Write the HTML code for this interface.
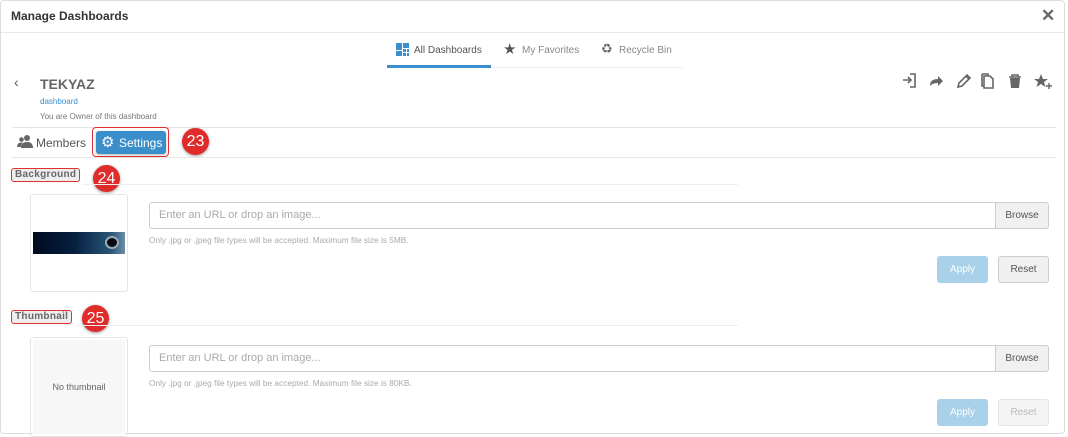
<!DOCTYPE html>
<html><head><meta charset="utf-8"><style>
*{box-sizing:border-box;margin:0;padding:0}
body{width:1068px;height:434px;overflow:hidden;background:#fff;font-family:"Liberation Sans",Arial,sans-serif;position:relative;color:#555}
.a{position:absolute}
.hl{position:absolute;height:1px;background:#e5e5e5}
.badge{position:absolute;width:27px;height:27px;border-radius:50%;background:#e02b2b;color:#fff;font-size:16px;text-align:center;line-height:27px;box-shadow:0 1px 3px rgba(0,0,0,.4)}
.lbl{position:absolute;border:1.5px solid #e03030;border-radius:3px;background:#eee;font-size:10px;font-weight:bold;color:#666;padding:0 3px;line-height:12px;letter-spacing:.3px}
.inp{position:absolute;border:1px solid #ccc;border-radius:3px 0 0 3px;font-size:11px;color:#aaa;padding-left:9px;line-height:25px}
.btn{position:absolute;border:1px solid #ccc;background:#f0f0f0;border-radius:3px;font-size:10px;color:#555;text-align:center}
.apply{position:absolute;background:#a9d1ea;border-radius:3px;color:#fff;font-size:10px;text-align:center}
.help{position:absolute;font-size:8.3px;color:#aaa}
</style></head><body>
<div class="a" style="left:0;top:0;width:1065px;height:434px;border:1px solid #ddd;border-radius:4px"></div>
<div class="a" style="left:11px;top:9px;font-size:12px;font-weight:bold;color:#333">Manage Dashboards</div>
<div class="a" style="left:1041px;top:6px;font-size:17px;font-weight:bold;color:#666">✕</div>
<div class="hl" style="left:1px;top:32px;width:1064px;background:#e8e8e8"></div>

<div class="hl" style="left:387px;top:67px;width:296px;background:#eee"></div>
<div class="a" style="left:387px;top:65px;width:104px;height:3px;background:#3b8fcc"></div>
<svg class="a" style="left:396px;top:43px" width="14" height="14" viewBox="0 0 14 14"><g fill="#3b8fcc"><rect x="0" y="0" width="6" height="7"/><rect x="7" y="0" width="6" height="5"/><rect x="0" y="8" width="6" height="5"/><rect x="7" y="6" width="3" height="3"/><rect x="11" y="6" width="2" height="3"/><rect x="7" y="10" width="3" height="3"/><rect x="11" y="10" width="2" height="3"/></g></svg>
<div class="a" style="left:414px;top:45px;font-size:10px;color:#555">All Dashboards</div>
<div class="a" style="left:503px;top:40px;font-size:15px;color:#555">★</div>
<div class="a" style="left:522px;top:45px;font-size:10px;color:#888">My Favorites</div>
<div class="a" style="left:601px;top:41px;font-size:13px;color:#666">♻</div>
<div class="a" style="left:619px;top:45px;font-size:10px;color:#888">Recycle Bin</div>

<div class="a" style="left:14px;top:74px;font-size:14px;color:#555">‹</div>
<div class="a" style="left:40px;top:76px;font-size:14px;font-weight:bold;color:#666">TEKYAZ</div>
<div class="a" style="left:40px;top:97px;font-size:8px;color:#3b8fcc">dashboard</div>
<div class="a" style="left:40px;top:112px;font-size:8px;color:#777">You are Owner of this dashboard</div>
<svg class="a" style="left:900px;top:72px" width="156" height="18" viewBox="0 0 156 18" fill="none" stroke="#666" stroke-width="1.6">
<path d="M3 8h8M8 5l3 3-3 3M10 2h5v13h-5"/>
<path d="M30 14c0-5 3-7 8-7V4l5 5-5 5v-3c-4 0-6 1-8 3z" fill="#666" stroke="none"/>
<path d="M58 15l1-4 8-8 3 3-8 8z M66 4l3 3"/>
<path d="M84 4h6l3 3v9h-9z M82 2h6v2 M82 2v12h2"/>
<path d="M109 5h12M112 5V3h6v2" /><path d="M110 6h10l-1 10h-8z" fill="#666" stroke="none"/>
<path d="M141 2l2 5h5l-4 3 1.5 5-4.5-3-4.5 3 1.5-5-4-3h5z" fill="#666" stroke="none"/><path d="M149 11v6M146 14h6" stroke-width="1.4"/>
</svg>
<div class="hl" style="left:12px;top:127px;width:1044px"></div>

<svg class="a" style="left:17px;top:135px" width="16" height="13" viewBox="0 0 16 13" fill="#666"><circle cx="10" cy="3" r="3"/><path d="M4 13c0-4 2-6 6-6s6 2 6 6z"/><circle cx="4.5" cy="4.5" r="2.3"/><path d="M0 12c0-3 1.5-4.5 4.5-4.5 1 0 1.5.2 1.5.2-1.5 1-2 2.5-2 4.3z"/></svg>
<div class="a" style="left:36px;top:136px;font-size:12px;color:#555">Members</div>
<div class="a" style="left:92px;top:127px;width:77px;height:30px;border:1.5px solid #e03030;border-radius:4px"></div>
<div class="a" style="left:96px;top:131px;width:70px;height:23px;background:#3a8fcb;border-radius:3px;box-shadow:0 1px 2px rgba(0,0,0,.3)"></div>
<div class="a" style="left:101px;top:133px;font-size:15px;color:#fff">⚙</div>
<div class="a" style="left:119px;top:136px;font-size:12px;color:#fff">Settings</div>
<div class="badge" style="left:182px;top:128px">23</div>
<div class="hl" style="left:12px;top:157px;width:1044px"></div>

<div class="lbl" style="left:11px;top:168px">Background</div>
<div class="badge" style="left:93px;top:165px">24</div>
<div class="hl" style="left:82px;top:184px;width:656px;background:#eee"></div>
<div class="a" style="left:30px;top:194px;width:98px;height:98px;border:1px solid #e5e5e5;border-radius:3px"></div>
<div class="a" style="left:33px;top:232px;width:92px;height:22px;background:linear-gradient(90deg,#010a1e 0%,#05203f 45%,#2a5677 85%,#6d8ea8 100%)"></div>
<div class="a" style="left:105px;top:236px;width:14px;height:13px;border-radius:50%;background:#0a0a10;border:2px solid #9ab"></div>
<div class="inp" style="left:149px;top:202px;width:847px;height:27px">Enter an URL or drop an image...</div>
<div class="btn" style="left:995px;top:202px;width:54px;height:27px;line-height:25px;border-radius:0 3px 3px 0">Browse</div>
<div class="help" style="left:149px;top:235px">Only .jpg or .jpeg file types will be accepted. Maximum file size is 5MB.</div>
<div class="apply" style="left:937px;top:256px;width:51px;height:27px;line-height:27px">Apply</div>
<div class="btn" style="left:998px;top:256px;width:51px;height:27px;line-height:25px">Reset</div>

<div class="lbl" style="left:11px;top:310px">Thumbnail</div>
<div class="badge" style="left:82px;top:305px">25</div>
<div class="hl" style="left:75px;top:325px;width:663px;background:#eee"></div>
<div class="a" style="left:30px;top:337px;width:98px;height:100px;border:1px solid #e5e5e5;border-radius:3px"></div>
<div class="a" style="left:33px;top:340px;width:92px;height:94px;background:#f7f7f7"></div>
<div class="a" style="left:33px;top:382px;width:92px;text-align:center;font-size:9px;color:#666">No thumbnail</div>
<div class="inp" style="left:149px;top:345px;width:847px;height:27px">Enter an URL or drop an image...</div>
<div class="btn" style="left:995px;top:345px;width:54px;height:27px;line-height:25px;border-radius:0 3px 3px 0">Browse</div>
<div class="help" style="left:149px;top:378px">Only .jpg or .jpeg file types will be accepted. Maximum file size is 80KB.</div>
<div class="apply" style="left:937px;top:399px;width:51px;height:27px;line-height:27px">Apply</div>
<div class="btn" style="left:998px;top:399px;width:51px;height:27px;line-height:25px;color:#bbb;background:#f4f4f4;border-color:#e5e5e5">Reset</div>
</body></html>
